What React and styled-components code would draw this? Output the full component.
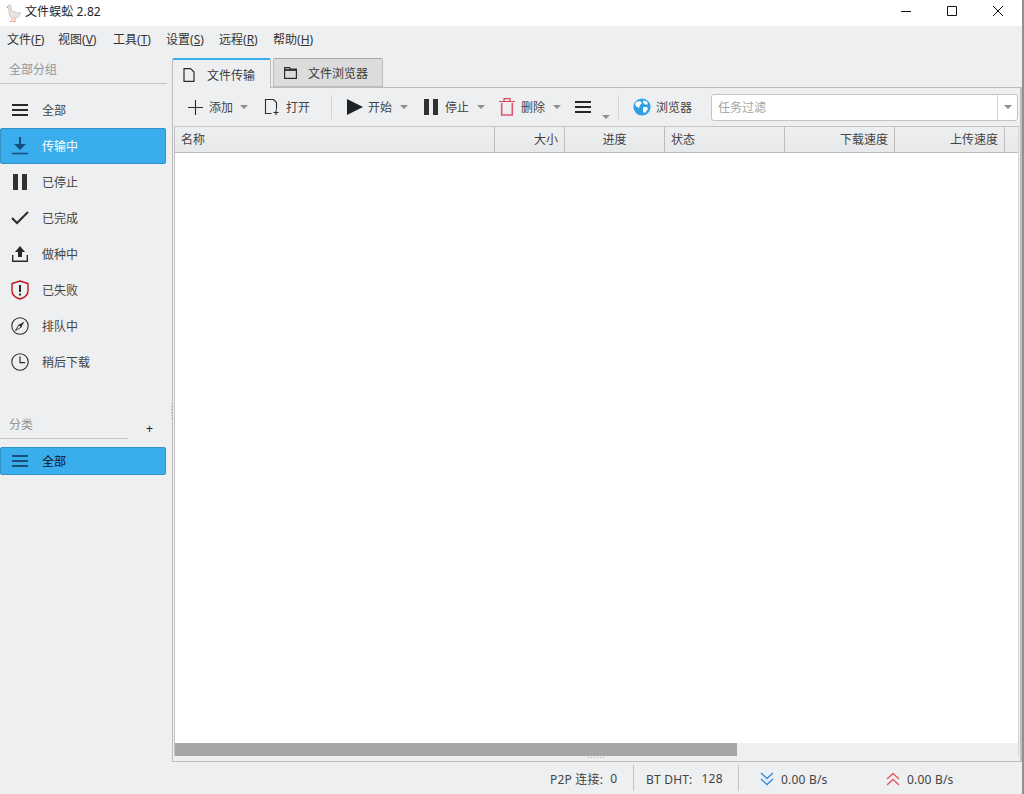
import React from "react";
import styled, { createGlobalStyle } from "styled-components";

const Global = createGlobalStyle`
  html, body { margin: 0; padding: 0; background: #eeeff1; }
  body { font-family: "Noto Sans", "Noto Sans CJK SC", sans-serif; font-size: 12px; color: #3a3a3a; }
  * { box-sizing: border-box; }
`;

const Win = styled.div`
  width: 1024px; height: 794px; display: flex; flex-direction: column; overflow: hidden;
  background: #eeeff1; border-right: 2px solid #8f9092;
`;
const TitleBar = styled.div`
  height: 26px; flex: none; background: #fff; display: flex; align-items: center; padding-left: 6px;
`;
const TitleText = styled.div`
  margin-left: 4px; font-size: 12px; color: #222; line-height: 22px; padding-bottom: 3px; letter-spacing: 0.1px;
`;
const WinBtns = styled.div`
  margin-left: auto; display: flex; align-items: center; height: 100%; padding-right: 1px;
`;
const WinBtn = styled.div`
  width: 46px; height: 100%; display: flex; align-items: center; justify-content: center; padding-bottom: 5px;
`;
const MenuBar = styled.div`
  height: 26px; flex: none; display: flex; padding-left: 7px; align-items: center;
`;
const MenuItem = styled.div`
  font-size: 12px; color: #333; width: ${p => p.$w}px; white-space: nowrap;
  u { text-underline-offset: 1px; }
`;
const Body = styled.div`
  flex: 1; display: flex; min-height: 0;
`;
const Sidebar = styled.div`
  width: 172px; flex: none; display: flex; flex-direction: column; position: relative;
`;
const GroupTitle = styled.div`
  height: 32px; padding: 2px 0 0 9px; margin-right: 5px; border-bottom: 1px solid #c2c3c5; color: #949494; font-size: 12px;
  display: flex; align-items: center;
`;
const NavList = styled.div`
  display: flex; flex-direction: column; margin-top: 8px;
`;
const NavItem = styled.div`
  width: 166px; height: 36px; display: flex; align-items: center; padding-left: 8px;
  font-size: 12px; color: ${p => (p.$active ? "#fff" : "#444")};
  border-radius: 2px;
  background: ${p => (p.$active ? "#3aadec" : "transparent")};
  border: 1px solid ${p => (p.$active ? "#3192c8" : "transparent")};
`;
const NavIcon = styled.span`
  width: 22px; height: 22px; display: flex; align-items: center; justify-content: center; margin-right: 11px; flex: none;
`;
const CatHead = styled.div`
  display: flex; margin-top: 21px; height: 44px;
`;
const CatTitle = styled.div`
  width: 128px; height: 38px; border-bottom: 1px solid #c2c3c5; padding: 14px 0 0 9px; color: #949494; font-size: 12px;
`;
const Plus = styled.div`
  margin-left: 18px; margin-top: 20px; font-size: 12px; color: #222; font-family: "Liberation Sans", sans-serif; line-height: 16px;
`;
const CatItem = styled(NavItem)`
  height: 28px; color: #111; margin-top: 2px;
`;
const Dots = styled.div`
  position: absolute; right: 0; top: 351px; width: 1px; height: 16px;
  background-image: linear-gradient(#b5b5b5 50%, transparent 50%); background-size: 1px 3px;
`;
const Main = styled.div`
  flex: 1; display: flex; flex-direction: column; min-width: 0; padding-top: 6px;
`;
const Tabs = styled.div`
  display: flex; height: 30px; flex: none; position: relative; z-index: 1;
`;
const Tab = styled.div`
  height: ${p => (p.$active ? "30px" : "29px")};
  width: ${p => (p.$active ? "99px" : "110px")};
  margin-left: ${p => (p.$active ? "0" : "2px")};
  display: flex; align-items: center; padding-left: 10px; padding-top: 1px; gap: ${p => (p.$active ? "9px" : "11px")};
  background: ${p => (p.$active ? "#eeeff1" : "#dcdcdc")};
  border: 1px solid #bdbdbd; border-bottom: ${p => (p.$active ? "none" : "1px solid #bdbdbd")};
  border-top: ${p => (p.$active ? "2px solid #3aadec" : "1px solid #a8a8a8")};
  border-radius: 2px 2px 0 0;
  font-size: 12px; color: #3a3a3a;
`;
const Pane = styled.div`
  height: 676px; margin-top: -1px; border: 1px solid #bdbdbd; border-right: 2px solid #bdbdbd; display: flex; flex-direction: column; padding: 0 1px;
  position: relative;
`;
const Toolbar = styled.div`
  height: 38px; flex: none; display: flex; align-items: center; padding-left: 13px; padding-right: 1px;
`;
const ToolBtn = styled.div`
  display: flex; align-items: center; font-size: 12px; color: #444; height: 100%;
  width: ${p => p.$w}px; flex: none;
`;
const ToolIcon = styled.span`
  width: ${p => p.$w || 22}px; height: 22px; display: flex; align-items: center; justify-content: center; flex: none; margin-right: ${p => p.$mr ?? 4}px;
`;
const Caret = styled.span`
  width: 0; height: 0; border-left: 4px solid transparent; border-right: 4px solid transparent; border-top: 4px solid #8d8d8d;
  margin-left: ${p => p.$ml ?? 8}px; flex: none; ${p => p.$down && "margin-top: 19px;"}
`;
const Sep = styled.div`
  width: 1px; height: 24px; background: #d3d4d6; flex: none; margin: 0 ${p => p.$r ?? 10}px 0 ${p => p.$l ?? 10}px;
`;
const Filter = styled.div`
  flex: 1; height: 27px; display: flex; background: #fff; border: 1px solid #c4c4c4; border-radius: 3px; margin-left: 2px;
  color: #a5a5a5; font-size: 12px; align-items: center; padding-left: 6px;
`;
const FilterDrop = styled.div`
  margin-left: auto; width: 20px; height: 100%; border-left: 1px solid #d6d6d6; display: flex; align-items: center; justify-content: center;
`;
const Table = styled.div`
  flex: 1; display: flex; flex-direction: column; background: #fff; border: 1px solid #c4c4c4; border-bottom: none; border-right: 1px solid #d4d4d4; min-height: 0; margin-bottom: 5px;
`;
const THead = styled.div`
  height: 26px; flex: none; display: flex; background: linear-gradient(#eeeff1, #e7e8ea); border-bottom: 1px solid #bdbdbd;
`;
const Th = styled.div`
  width: ${p => p.$w}px; flex: none; border-right: 1px solid #bdbdbd; padding: 0 6px 1px; display: flex; align-items: center;
  justify-content: ${p => p.$align || "flex-start"}; font-size: 12px; color: #444;
`;
const TBody = styled.div`
  flex: 1; background: #fff;
`;
const HScroll = styled.div`
  height: 13px; flex: none; background: #eeeff1;
`;
const HThumb = styled.div`
  width: 562px; height: 100%; background: #a6a6a6;
`;
const Grip = styled.div`
  position: absolute; left: 415px; bottom: 3px; width: 16px; height: 1px;
  background-image: linear-gradient(90deg, #b5b5b5 50%, transparent 50%); background-size: 3px 1px;
`;
const Status = styled.div`
  height: 32px; flex: none; display: flex; align-items: center; font-size: 12px; color: #444; padding-left: 378px;
`;
const StatCell = styled.div`
  display: flex; align-items: center; height: 26px; flex: none; width: ${p => p.$w}px; padding-left: ${p => p.$pl}px;
  border-right: ${p => (p.$sep ? "1px solid #c4c4c4" : "none")};
  letter-spacing: 0.2px; padding-top: 2px;
`;
const Num = styled.span`
  margin-left: ${p => p.$ml}px; position: relative; top: -1px;
`;
const SpeedIcon = styled.span`
  display: flex; margin-right: 7px; margin-top: -1px;
`;

const ic = { fill: "none", stroke: "#2b2b2b" };

const Bars = ({ color = "#26282a" }) => (
  <svg width="16" height="12" viewBox="0 0 16 12"><path d="M0 1h16M0 6h16M0 11h16" stroke={color} strokeWidth="2" fill="none" /></svg>
);
const Down = () => (
  <svg width="16" height="18" viewBox="0 0 16 18"><path d="M8 0v8" stroke="#17507c" strokeWidth="2" /><path d="M2 7h12l-6 6z" fill="#17507c" /><path d="M0 16.5h16" stroke="#17507c" strokeWidth="1.6" /></svg>
);
const Pause = () => (
  <svg width="14" height="16" viewBox="0 0 14 16"><path d="M0 0h5v16H0zM9 0h5v16H9z" fill="#2f3133" /></svg>
);
const Check = () => (
  <svg width="18" height="14" viewBox="0 0 18 14"><path d="M1 7l5 5L17 1" {...ic} strokeWidth="2" /></svg>
);
const Upload = () => (
  <svg width="16" height="16" viewBox="0 0 16 16"><path d="M8 0L3 6h3v5h4V6h3z" fill="#26282a" /><path d="M.7 9v6.3h14.6V9" {...ic} strokeWidth="1.4" /></svg>
);
const Shield = () => (
  <svg width="18" height="20" viewBox="0 0 18 20"><path d="M9 1l8 2.6V11c0 4-4 6.8-8 8-4-1.2-8-4-8-8V3.6z" fill="none" stroke="#c5151c" strokeWidth="1.4" /><path d="M8 5h2v7H8zM8 13.5h2v2H8z" fill="#2b2b2b" /></svg>
);
const Compass = () => (
  <svg width="18" height="18" viewBox="0 0 18 18"><circle cx="9" cy="9" r="8.2" {...ic} strokeWidth="1.1" /><path d="M13.5 4.5L10.2 10.2 7.8 7.8z" fill="#2b2b2b" /><path d="M4.5 13.5L7.8 7.8l2.4 2.4z" fill="none" stroke="#2b2b2b" strokeWidth="0.9" /></svg>
);
const Clock = () => (
  <svg width="18" height="18" viewBox="0 0 18 18"><circle cx="9" cy="9" r="8.2" {...ic} strokeWidth="1.1" /><path d="M9 3.5V9.6h5" {...ic} strokeWidth="1.2" /></svg>
);
const File = () => (
  <svg width="12" height="14" viewBox="0 0 12 14"><path d="M1 .6h6.5l3.5 3.5v9.3H1z" {...ic} strokeWidth="1.2" /></svg>
);
const Folder = () => (
  <svg width="13" height="12" viewBox="0 0 13 12"><path d="M.6.6h5l1 1.6h5.8v9.2H.6z" {...ic} strokeWidth="1.2" /><path d="M.6 3h11.8" {...ic} strokeWidth="1.8" /></svg>
);
const PlusIcon = () => (
  <svg width="15" height="15" viewBox="0 0 15 15"><path d="M7.5 0v15M0 7.5h15" {...ic} strokeWidth="1.1" /></svg>
);
const OpenIcon = () => (
  <svg width="16" height="17" viewBox="0 0 16 17"><path d="M7.5 14.5h-6V.5h8l3 3v7" {...ic} strokeWidth="1.1" /><path d="M12 11v5M9.5 13.5h5" {...ic} strokeWidth="1.1" /></svg>
);
const Play = () => (
  <svg width="16" height="16" viewBox="0 0 16 16"><path d="M0 0l16 8-16 8z" fill="#1f2225" /></svg>
);
const Trash = () => (
  <svg width="16" height="18" viewBox="0 0 16 18"><path d="M0 3.5h16M5 3.5V.7h6v2.8" fill="none" stroke="#d9455a" strokeWidth="1.2" /><path d="M2.7 5v12h10.6V5" fill="none" stroke="#e2566c" strokeWidth="1.6" /></svg>
);
const Globe = () => (
  <svg width="18" height="18" viewBox="0 0 18 18"><circle cx="9" cy="9" r="8.6" fill="#2e9fe4" /><path d="M3 4l4-1 2 2-2 2-1 3-2-1-2-2zM10 2.5l4 1 1 3-3 0-2-2zM10 9l4 0 1 2-3 4-2-1z" fill="#fff" /></svg>
);
const Goose = () => (
  <svg width="15" height="19" viewBox="0 0 15 19"><path d="M2.5 1C4 .2 5 1 5 3l.6 4 6 2 2.8-.4-1.4 3.8c-1.6 2-6.4 2.4-8.4.6C3 11 2.8 7 2.8 4L1.5 3.4z" fill="#ebe6e1" stroke="#a89d94" strokeWidth="0.5" /><path d="M1.6 2.6L0 3.4l1.8.6z" fill="#d9805a" /><path d="M6 14.5v3h-2M9 14.5v3h-2" fill="none" stroke="#d9805a" strokeWidth="0.8" /></svg>
);

const nav = [
  ["全部", <Bars />],
  ["传输中", <Down />, true],
  ["已停止", <Pause />],
  ["已完成", <Check />],
  ["做种中", <Upload />],
  ["已失败", <Shield />],
  ["排队中", <Compass />],
  ["稍后下载", <Clock />],
];

const menus = [["文件", "F", 51], ["视图", "V", 55], ["工具", "T", 53], ["设置", "S", 53], ["远程", "R", 54], ["帮助", "H", 50]];

export default function App() {
  return (
    <Win>
      <Global />
      <TitleBar>
        <Goose />
        <TitleText>文件蜈蚣 2.82</TitleText>
        <WinBtns>
          <WinBtn><svg width="10" height="10"><path d="M0 5.5h10" stroke="#111" /></svg></WinBtn>
          <WinBtn><svg width="10" height="10"><path d="M.5.5h9v9h-9z" fill="none" stroke="#111" /></svg></WinBtn>
          <WinBtn><svg width="10" height="10"><path d="M0 0l10 10M10 0L0 10" stroke="#111" /></svg></WinBtn>
        </WinBtns>
      </TitleBar>
      <MenuBar>
        {menus.map(([t, k, w]) => (
          <MenuItem key={k} $w={w}>{t}(<u>{k}</u>)</MenuItem>
        ))}
      </MenuBar>
      <Body>
        <Sidebar>
          <GroupTitle>全部分组</GroupTitle>
          <NavList>
            {nav.map(([t, icon, active]) => (
              <NavItem key={t} $active={active}>
                <NavIcon>{icon}</NavIcon>{t}
              </NavItem>
            ))}
          </NavList>
          <CatHead>
            <CatTitle>分类</CatTitle>
            <Plus>+</Plus>
          </CatHead>
          <CatItem $active>
            <NavIcon><Bars color="#17507c" /></NavIcon>全部
          </CatItem>
          <Dots />
        </Sidebar>
        <Main>
          <Tabs>
            <Tab $active><File />&nbsp;文件传输</Tab>
            <Tab><Folder />文件浏览器</Tab>
          </Tabs>
          <Pane>
            <Toolbar>
              <ToolBtn $w={77}><ToolIcon $w={16} $mr={6}><PlusIcon /></ToolIcon>添加<Caret $ml={7} /></ToolBtn>
              <ToolBtn $w={67}><ToolIcon $w={16} $mr={6}><OpenIcon /></ToolIcon>打开</ToolBtn>
              <Sep $l={0} $r={15} />
              <ToolBtn $w={76}><ToolIcon $w={16} $mr={5}><Play /></ToolIcon>开始<Caret /></ToolBtn>
              <ToolBtn $w={76}><ToolIcon $w={16} $mr={6}><Pause /></ToolIcon>停止<Caret /></ToolBtn>
              <ToolBtn $w={76}><ToolIcon $w={16} $mr={6}><Trash /></ToolIcon>删除<Caret /></ToolBtn>
              <ToolBtn $w={36}><ToolIcon $w={16} $mr={11}><Bars /></ToolIcon><Caret $ml={0} $down /></ToolBtn>
              <Sep $l={7} $r={14} />
              <ToolBtn $w={76}><ToolIcon $w={18} $mr={5}><Globe /></ToolIcon>浏览器</ToolBtn>
              <Filter>任务过滤<FilterDrop><Caret $ml={0} /></FilterDrop></Filter>
            </Toolbar>
            <Table>
              <THead>
                <Th $w={320}>名称</Th>
                <Th $w={70} $align="flex-end">大小</Th>
                <Th $w={100} $align="center">进度</Th>
                <Th $w={120}>状态</Th>
                <Th $w={110} $align="flex-end">下载速度</Th>
                <Th $w={110} $align="flex-end">上传速度</Th>
              </THead>
              <TBody />
              <HScroll><HThumb /></HScroll>
            </Table>
            <Grip />
          </Pane>
        </Main>
      </Body>
      <Status>
        <StatCell $w={256} $pl={172} $sep>P2P 连接:<Num $ml={7}>0</Num></StatCell>
        <StatCell $w={105} $pl={12} $sep>BT DHT:<Num $ml={9}>128</Num></StatCell>
        <StatCell $w={126} $pl={21}><SpeedIcon><svg width="14" height="14" viewBox="0 0 14 14"><path d="M1 1l6 5.5L13 1M1 7l6 5.5L13 7" fill="none" stroke="#2e8fe0" strokeWidth="1.4" /></svg></SpeedIcon>0.00 B/s</StatCell>
        <StatCell $w={130} $pl={21}><SpeedIcon><svg width="14" height="14" viewBox="0 0 14 14"><path d="M1 7l6-5.5L13 7M1 13l6-5.5L13 13" fill="none" stroke="#e25a5a" strokeWidth="1.4" /></svg></SpeedIcon>0.00 B/s</StatCell>
      </Status>
    </Win>
  );
}
